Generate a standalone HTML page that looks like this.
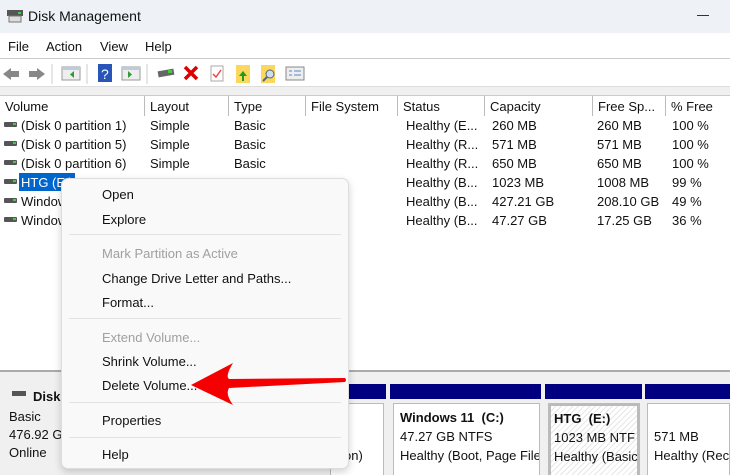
<!DOCTYPE html><html><head><style>
*{margin:0;padding:0;box-sizing:border-box}
body{width:730px;height:475px;overflow:hidden;background:#fff;font-family:"Liberation Sans",sans-serif;font-size:13px;color:#111;position:relative}
.a{position:absolute;white-space:nowrap}
.hdr{position:absolute;top:95px;height:21px;border-right:1px solid #bbb;border-top:1px solid #ccc;background:#fff;padding:3px 0 0 5px;font-size:13px}
.row{position:absolute;left:0;width:730px;height:19px}
.row span{position:absolute;top:2px;white-space:nowrap}
.di{position:absolute;left:4px;top:6px;width:13px;height:5px;background:#555;border-radius:1px}
.di:after{content:"";position:absolute;right:1px;top:1px;width:3px;height:2px;background:#4c4}
.mi{position:absolute;left:102px;font-size:13px}
.g{color:#a0a0a0}
.sep{position:absolute;left:69px;width:272px;height:1px;background:#e2e2e2}
.blue{position:absolute;top:384px;height:15px;background:#000080}
.vb{position:absolute;top:403px;height:72px;background:#fff;border:1px solid #bbb;border-bottom:none;padding:4px 0 0 6px;line-height:19px;overflow:hidden;white-space:nowrap}
</style></head><body>
<div class="a" style="left:0;top:0;width:730px;height:33px;background:#eef2f7"></div>
<svg class="a" style="left:6px;top:8px" width="18" height="16"><rect x="1" y="2" width="16" height="6" fill="#555"/><rect x="12" y="4" width="3" height="2" fill="#4c4"/><rect x="3" y="8" width="12" height="6" fill="#ddd" stroke="#777"/></svg>
<div class="a" style="left:28px;top:8px;font-size:14px">Disk Management</div>
<div class="a" style="left:697px;top:15px;width:12px;height:1px;background:#333"></div>
<div class="a" style="left:8px;top:39px">File</div><div class="a" style="left:46px;top:39px">Action</div><div class="a" style="left:100px;top:39px">View</div><div class="a" style="left:145px;top:39px">Help</div>
<div class="a" style="left:0;top:58px;width:730px;height:1px;background:#ccc"></div>
<svg class="a" style="left:0;top:60px" width="320" height="28">
<path d="M3 14l8-6v3h8v6h-8v3z" fill="#888"/><path d="M45 14l-8-6v3h-8v6h8v3z" fill="#888"/>
<line x1="52" y1="4" x2="52" y2="24" stroke="#ccc"/>
<rect x="62" y="7" width="18" height="13" fill="#eee" stroke="#999"/><rect x="62" y="7" width="18" height="3" fill="#bcd"/><path d="M74 11v7l-4-3.5z" fill="#393"/>
<line x1="87" y1="4" x2="87" y2="24" stroke="#ccc"/>
<rect x="98" y="4" width="14" height="18" fill="#2855b8"/><text x="101" y="19" fill="#fff" font-size="14" font-family="Liberation Sans">?</text>
<rect x="122" y="7" width="18" height="13" fill="#eee" stroke="#999"/><rect x="122" y="7" width="18" height="3" fill="#bcd"/><path d="M128 11v7l4-3.5z" fill="#393"/>
<line x1="147" y1="4" x2="147" y2="24" stroke="#ccc"/>
<rect x="158" y="10" width="16" height="6" fill="#666" transform="rotate(-10 166 13)"/><rect x="168" y="10" width="4" height="3" fill="#4c4"/>
<path d="M185 7l12 12M197 7l-12 12" stroke="#d00" stroke-width="3.5"/>
<rect x="211" y="6" width="12" height="15" fill="#fff" stroke="#aaa"/><path d="M213 14l3 3 5-7" stroke="#e44" fill="none" stroke-width="1.5"/>
<rect x="236" y="5" width="14" height="18" fill="#fbd75b"/><path d="M243 11l-4 5h3v5h2v-5h3z" fill="#292"/>
<rect x="261" y="5" width="14" height="18" fill="#fbd75b"/><circle cx="270" cy="14" r="4" fill="#cde" stroke="#567"/><path d="M267 17l-4 4" stroke="#567" stroke-width="2"/>
<rect x="286" y="7" width="18" height="13" fill="#eee" stroke="#888"/><path d="M289 11h3M289 15h3M294 11h7M294 15h7" stroke="#58c"/>
</svg>
<div class="a" style="left:0;top:86px;width:730px;height:9px;background:#f0f0f0;border-top:1px solid #ddd"></div>
<div class="hdr" style="left:0;width:145px">Volume</div>
<div class="hdr" style="left:145px;width:84px">Layout</div>
<div class="hdr" style="left:229px;width:77px">Type</div>
<div class="hdr" style="left:306px;width:92px">File System</div>
<div class="hdr" style="left:398px;width:87px">Status</div>
<div class="hdr" style="left:485px;width:108px">Capacity</div>
<div class="hdr" style="left:593px;width:73px">Free Sp...</div>
<div class="hdr" style="left:666px;width:64px;border-right:none">% Free</div>
<div class="row" style="top:116px"><i class="di"></i><span style="left:21px">(Disk 0 partition 1)</span><span style="left:150px">Simple</span><span style="left:234px">Basic</span><span style="left:406px">Healthy (E...</span><span style="left:492px">260 MB</span><span style="left:597px">260 MB</span><span style="left:672px">100 %</span></div>
<div class="row" style="top:135px"><i class="di"></i><span style="left:21px">(Disk 0 partition 5)</span><span style="left:150px">Simple</span><span style="left:234px">Basic</span><span style="left:406px">Healthy (R...</span><span style="left:492px">571 MB</span><span style="left:597px">571 MB</span><span style="left:672px">100 %</span></div>
<div class="row" style="top:154px"><i class="di"></i><span style="left:21px">(Disk 0 partition 6)</span><span style="left:150px">Simple</span><span style="left:234px">Basic</span><span style="left:406px">Healthy (R...</span><span style="left:492px">650 MB</span><span style="left:597px">650 MB</span><span style="left:672px">100 %</span></div>
<div class="row" style="top:173px"><i class="di"></i><span style="left:19px;top:0;height:18px;padding:2px 2px 0;background:#0066cc;color:#fff">HTG (E:)</span><span style="left:310px;color:#999">NTFS</span><span style="left:406px">Healthy (B...</span><span style="left:492px">1023 MB</span><span style="left:597px">1008 MB</span><span style="left:672px">99 %</span></div>
<div class="row" style="top:192px"><i class="di"></i><span style="left:21px">Windows</span><span style="left:406px">Healthy (B...</span><span style="left:492px">427.21 GB</span><span style="left:597px">208.10 GB</span><span style="left:672px">49 %</span></div>
<div class="row" style="top:211px"><i class="di"></i><span style="left:21px">Windows</span><span style="left:406px">Healthy (B...</span><span style="left:492px">47.27 GB</span><span style="left:597px">17.25 GB</span><span style="left:672px">36 %</span></div>
<div class="a" style="left:0;top:370px;width:730px;height:105px;background:#f0f0f0;border-top:2px solid #aaa"></div>
<div class="blue" style="left:330px;width:56px"></div>
<div class="blue" style="left:390px;width:151px"></div>
<div class="blue" style="left:545px;width:97px"></div>
<div class="blue" style="left:645px;width:85px"></div>
<div class="vb" style="left:330px;width:54px;padding-left:0"><br><br>tition)</div>
<div class="vb" style="left:393px;width:147px"><b>Windows 11 &nbsp;(C:)</b><br>47.27 GB NTFS<br>Healthy (Boot, Page File</div>
<div class="vb" style="left:548px;width:92px;border:3px solid #bbb;border-bottom:none;padding:3px 0 0 3px;background:repeating-linear-gradient(135deg,#fff 0 3px,#e6e6e6 3px 4px)"><b>HTG &nbsp;(E:)</b><br>1023 MB NTF<br>Healthy (Basic</div>
<div class="vb" style="left:647px;width:83px"><br>571 MB<br>Healthy (Rec</div>
<div class="a" style="left:0;top:377px;width:130px;height:98px;background:#f0f0f0"></div>
<div class="a" style="left:12px;top:391px;width:14px;height:5px;background:#555"></div>
<div class="a" style="left:33px;top:389px;font-weight:bold">Disk</div>
<div class="a" style="left:9px;top:408px;line-height:18px">Basic<br>476.92 G<br>Online</div>
<div class="a" style="left:61px;top:178px;width:288px;height:291px;background:#f9f9f9;border:1px solid #ddd;border-radius:7px;box-shadow:0 3px 8px rgba(0,0,0,.18)"></div>
<div class="mi" style="top:187px">Open</div>
<div class="mi" style="top:212px">Explore</div>
<div class="sep" style="top:234px"></div>
<div class="mi g" style="top:246px">Mark Partition as Active</div>
<div class="mi" style="top:271px">Change Drive Letter and Paths...</div>
<div class="mi" style="top:295px">Format...</div>
<div class="sep" style="top:318px"></div>
<div class="mi g" style="top:330px">Extend Volume...</div>
<div class="mi" style="top:354px">Shrink Volume...</div>
<div class="mi" style="top:378px">Delete Volume...</div>
<div class="sep" style="top:402px"></div>
<div class="mi" style="top:413px">Properties</div>
<div class="sep" style="top:437px"></div>
<div class="mi" style="top:447px">Help</div>
<svg class="a" style="left:185px;top:358px" width="165" height="50"><path d="M6 27L48 5Q40 18 44 21L160 20Q162 22 160 24L44 30Q40 36 48 47Z" fill="#f40000"/></svg>
</body></html>
